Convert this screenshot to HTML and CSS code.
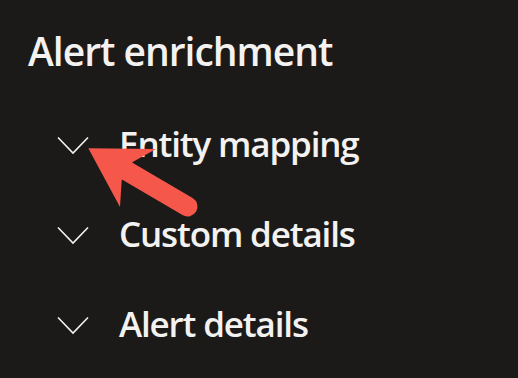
FILE: index.html
```html
<!DOCTYPE html>
<html lang="en">
<head>
<meta charset="utf-8">
<link rel="stylesheet" href="styles.css">
</head>
<body>
<div class="panel">
  <h1 class="title">Alert enrichment</h1>
  <ul class="sections">
    <li class="section">
      <svg class="chevron" viewBox="0 0 32 35" width="32" height="35"><polyline points="1,11.5 16,27 31,11.5"/></svg>
      <span class="label">Entity mapping</span>
    </li>
    <li class="section">
      <svg class="chevron" viewBox="0 0 32 35" width="32" height="35"><polyline points="1,11.5 16,27 31,11.5"/></svg>
      <span class="label">Custom details</span>
    </li>
    <li class="section">
      <svg class="chevron" viewBox="0 0 32 35" width="32" height="35"><polyline points="1,11.5 16,27 31,11.5"/></svg>
      <span class="label">Alert details</span>
    </li>
  </ul>
  <svg class="callout" viewBox="0 0 518 378" width="518" height="378">
    <polygon points="88.3,148.3 156,149 132.7,162 121.7,180 120,207"/>
    <line x1="127" y1="171" x2="187.5" y2="206.5"/>
  </svg>
</div>
</body>
</html>
```
FILE: styles.css
```css
html, body {
  margin: 0;
  padding: 0;
  background: #1b1a19;
}
.panel {
  position: relative;
  width: 518px;
  height: 378px;
  overflow: hidden;
  font-family: "Open Sans", "Noto Sans", sans-serif;
  color: #f3f2f1;
}
.title {
  margin: 0;
  padding: 31px 0 0 28px;
  font-size: 39px;
  line-height: 39px;
  font-weight: 600;
  letter-spacing: -1px;
}
.sections {
  list-style: none;
  margin: 56px 0 0 0;
  padding: 0 0 0 57px;
  display: flex;
  flex-direction: column;
  gap: 55px;
}
.section {
  display: flex;
  align-items: flex-start;
  gap: 30px;
  height: 35px;
}
.chevron {
  flex: none;
  fill: none;
  stroke: #f3f2f1;
  stroke-width: 1.6;
}
.label {
  font-size: 35px;
  line-height: 35px;
  font-weight: 600;
  letter-spacing: -1.15px;
  white-space: nowrap;
}
.callout {
  position: absolute;
  left: 0;
  top: 0;
}
.callout polygon {
  fill: #f5584b;
}
.callout line {
  stroke: #f5584b;
  stroke-width: 20;
  stroke-linecap: round;
}
```
